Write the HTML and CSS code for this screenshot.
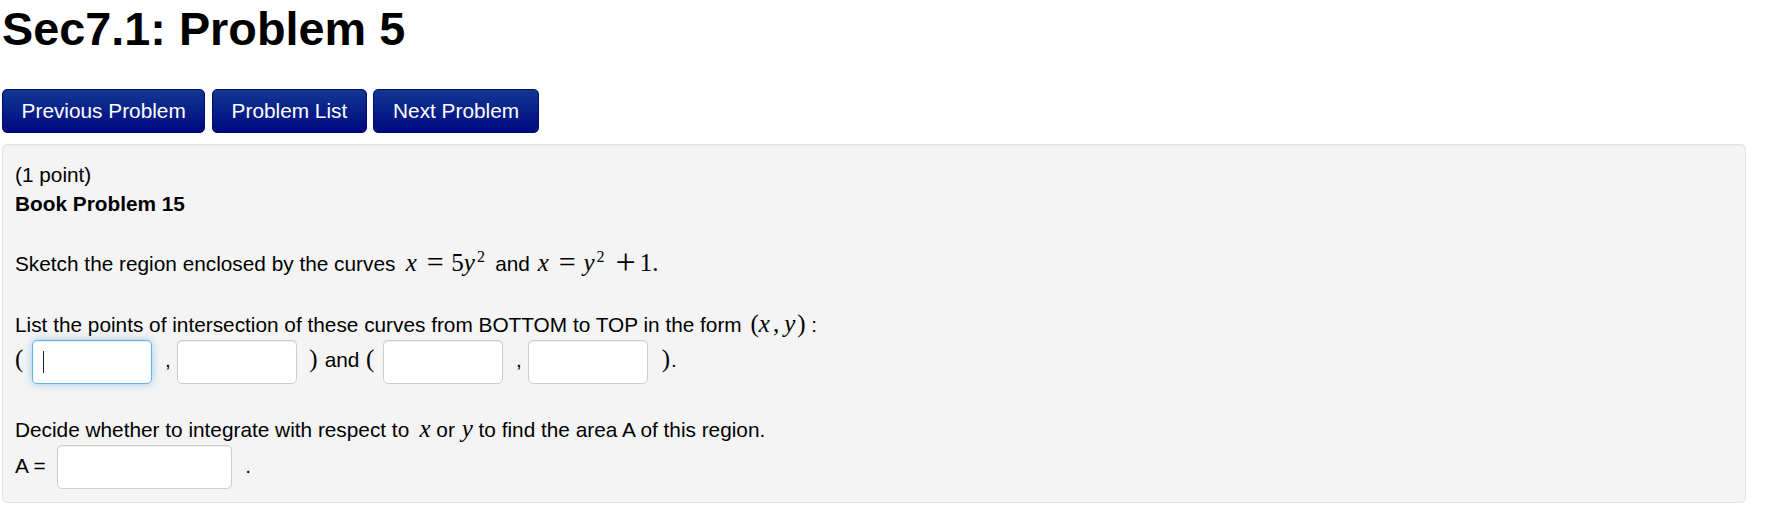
FILE: index.html
```html
<!DOCTYPE html>
<html>
<head>
<meta charset="utf-8">
<title>Sec7.1: Problem 5</title>
<link rel="stylesheet" href="styles.css">
</head>
<body>
<div class="page">
  <h1 class="title">Sec7.1: Problem 5</h1>
  <div class="nav">
    <a class="btn">Previous Problem</a>
    <a class="btn">Problem List</a>
    <a class="btn">Next Problem</a>
  </div>
  <div class="problem">
    <div class="line">(1 point)</div>
    <div class="line bold">Book Problem 15</div>
    <div class="line para">Sketch the region enclosed by the curves <span class="m eq1"><i class="vx">x</i><span class="rel">=</span>5<i class="vy">y</i><sup>2</sup></span> and <span class="m eq2"><i class="vx">x</i><span class="rel">=</span><i class="vy">y</i><sup>2</sup><span class="bin">+</span>1.</span></div>
    <div class="line para">List the points of intersection of these curves from BOTTOM to TOP in the form <span class="m pair">(<i class="px">x</i>,<i class="y2">y</i>)</span> :</div>
    <div class="row"><span class="m open">(</span><input class="ans focused" type="text"><span class="comma">,</span><input class="ans second" type="text"><span class="m close">)</span><span class="and">and</span><span class="m open2">(</span><input class="ans" type="text"><span class="comma">,</span><input class="ans second" type="text"><span class="m close2">)</span><span class="dot">.</span></div>
    <div class="line para">Decide whether to integrate with respect to <span class="m mx"><i>x</i></span> or <span class="m my"><i>y</i></span> to find the area A of this region.</div>
    <div class="row arow"><span class="alabel">A =</span><input class="ans wide" type="text"><span class="adot">.</span></div>
  </div>
</div>
</body>
</html>
```
FILE: styles.css
```css
body {
  margin: 0;
  background: #fff;
  color: #000;
  font-family: "Liberation Sans", Arial, sans-serif;
}

.page {
  padding: 0 22px 0 2px;
}

.title {
  margin: 4px 0 0;
  font-size: 46.8px;
  line-height: 51.5px;
  font-weight: bold;
}

.nav {
  display: flex;
  gap: 6.7px;
  margin-top: 33px;
}

.btn {
  display: flex;
  align-items: center;
  box-sizing: border-box;
  height: 44.4px;
  padding: 0 18.6px;
  font-size: 20.8px;
  color: #fff;
  border: 1px solid #000a6e;
  border-radius: 5px;
  background: linear-gradient(to bottom, #113892 0%, #00087f 100%);
  cursor: pointer;
}

.problem {
  margin-top: 11.6px;
  border: 1px solid #e2e2e2;
  border-radius: 5px;
  background: #f4f4f4;
  box-shadow: inset 0 1px 1px rgba(0, 0, 0, 0.04);
  padding: 15.6px 12px 13.4px 12px;
  font-size: 20.8px;
  line-height: 28.6px;
}

.line {
  height: 28.6px;
  white-space: nowrap;
}

.bold {
  font-weight: bold;
}

.para {
  margin-top: 32px;
}

.m {
  font-family: "Liberation Serif", "Times New Roman", serif;
  font-size: 25px;
  line-height: 20px;
}

.m i {
  font-style: italic;
}

.eq1 {
  margin: 0 3.5px 0 4.5px;
}

.eq2 {
  margin-left: 2px;
}

.pair {
  margin-left: 3px;
}

.px {
  margin: 0 3px 0 0;
}

.y2 {
  margin: 0 2px 0 5px;
}

.mx {
  margin-left: 4.5px;
}

.my {
  margin-left: 1px;
}

.vx {
  margin-right: 3px;
}

.vy {
  margin-right: 1px;
}

.m sup {
  font-size: 16px;
  line-height: 0;
  vertical-align: 9px;
  margin: 0 1px;
}

.rel {
  font-size: 30px;
  vertical-align: -1px;
  margin: 0 7.7px 0 7px;
}

.bin {
  font-size: 36px;
  vertical-align: -3px;
  margin: 0 4px 0 10px;
}

.row {
  height: 45px;
  line-height: 41.8px;
  white-space: nowrap;
}

.arow {
  height: 44px;
  line-height: 40px;
}

.ans {
  box-sizing: border-box;
  width: 120px;
  height: 44px;
  margin: 0 0 0 9px;
  padding: 0 10px;
  vertical-align: middle;
  border: 1px solid #cccccc;
  border-radius: 5px;
  background: #fff;
  box-shadow: inset 0 1px 1px rgba(0, 0, 0, 0.075);
  font-size: 18px;
  outline: none;
}

.focused {
  border-color: #66afe9;
  box-shadow: inset 0 1px 1px rgba(0, 0, 0, 0.075), 0 0 8px rgba(102, 175, 233, 0.6);
  background: linear-gradient(#222, #222) no-repeat 10px 50% / 1px 22px, #fff;
}

.second {
  margin-left: 6px;
}

.comma {
  margin-left: 12.6px;
}

.close {
  margin-left: 12.6px;
}

.and {
  margin-left: 7px;
}

.open2 {
  margin-left: 6.7px;
}

.close2 {
  margin-left: 14px;
}

.dot {
  margin-left: 1px;
}

.alabel {
  display: inline-block;
}

.wide {
  width: 175px;
  margin-left: 11.5px;
}

.adot {
  margin-left: 13px;
}
```
